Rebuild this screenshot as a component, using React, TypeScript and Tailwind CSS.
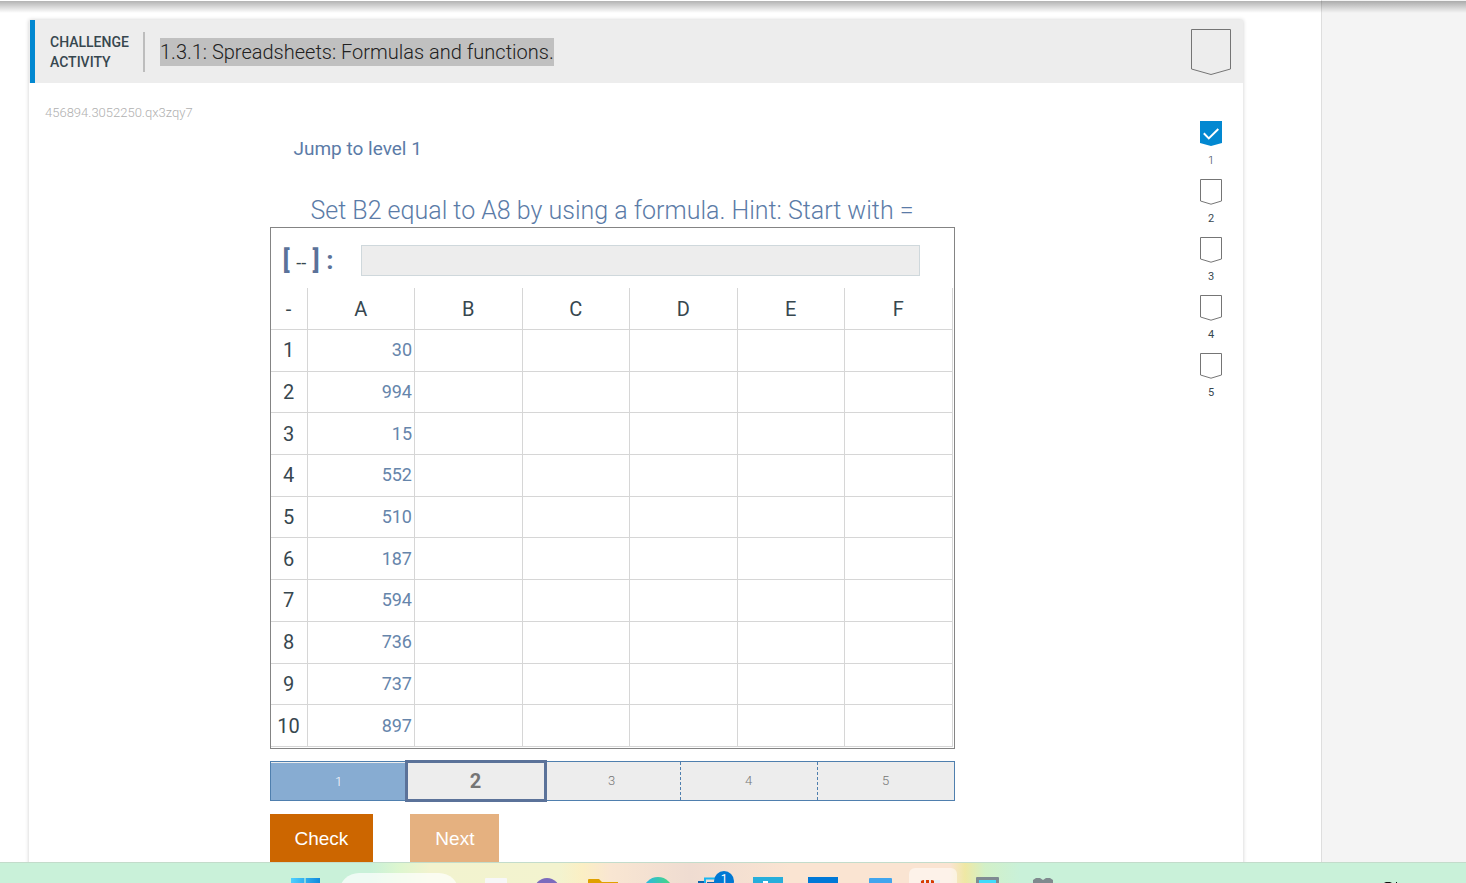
import React from "react";
import { clsx } from "clsx";

const columns = ["A", "B", "C", "D", "E", "F"];
const values = [30, 994, 15, 552, 510, 187, 594, 736, 737, 897];
const levels = [1, 2, 3, 4, 5];

function LevelBadge({ done }: { done: boolean }) {
  return (
    <svg className="w-[22px] h-[26px]" viewBox="0 0 22 26" fill="none">
      {done ? (
        <>
          <path d="M0 0H22V22L11 25L0 22Z" fill="#0288d1" />
          <path d="M3.8 12.2L8.8 17.4L18.3 8" stroke="#fff" strokeWidth="2" />
        </>
      ) : (
        <path d="M.5 .5H21.5V22L11 25.2L.5 22Z" stroke="#757575" />
      )}
    </svg>
  );
}

function Header() {
  return (
    <header className="flex items-center bg-[#ededed] h-[63px] border-l border-[#ededed] pr-3">
      <div className="w-[5px] h-full bg-[#0288d1]" />
      <div className="w-[110px] pl-[15px] mr-[15px] border-r-2 border-[#bdbdbd] text-sm leading-5 font-medium text-[#37474f]">
        CHALLENGE ACTIVITY
      </div>
      <h1 className="text-xl leading-7 font-light text-[#212121] bg-[#c0c0c0]">
        1.3.1: Spreadsheets: Formulas and functions.
      </h1>
      <svg className="w-10 h-[46px] ml-auto" viewBox="0 0 40 46" fill="none">
        <path d="M.5 .5H39.5V40L20 45.5L.5 40Z" stroke="#757575" />
      </svg>
    </header>
  );
}

function Spreadsheet() {
  return (
    <div className="border border-[#848484] h-[522px] pr-px">
      <div className="flex items-center h-[60px] pt-1 pl-3">
        <label
          htmlFor="formula"
          className="w-[78px] text-[26px] leading-8 font-bold text-[#5b7299] whitespace-pre"
        >
          [ <span className="text-lg font-normal text-[#37474f]">--</span> ] :
        </label>
        <input
          id="formula"
          disabled
          className="flex-1 h-[31px] mr-[33px] bg-[#ededed] border border-[#cfd8dc]"
        />
      </div>
      <table className="w-full h-[459px] table-fixed border-separate border-spacing-0">
        <thead>
          <tr>
            <th className="w-[37px] h-[42px] border-r border-b border-[#d6d6d6] text-xl font-normal text-[#37474f]">
              -
            </th>
            {columns.map((name) => (
              <th
                key={name}
                className="border-r border-b border-[#d6d6d6] text-xl font-normal text-[#37474f]"
              >
                {name}
              </th>
            ))}
          </tr>
        </thead>
        <tbody>
          {values.map((value, i) => (
            <tr key={i}>
              <th className="border-r border-b border-[#d6d6d6] text-xl font-normal text-[#37474f]">
                {i + 1}
              </th>
              {columns.map((name) => (
                <td
                  key={name}
                  className="border-r border-b border-[#d6d6d6] pr-[2px] text-right text-lg text-[#6685ab]"
                >
                  {name === "A" ? value : ""}
                </td>
              ))}
            </tr>
          ))}
        </tbody>
      </table>
    </div>
  );
}

function ProgressBar() {
  return (
    <ol className="flex h-10 mt-3 border border-[#4f7fae] bg-[#ededed] text-[13px] font-light text-[#757575]">
      {levels.map((n) => (
        <li
          key={n}
          className={clsx(
            "flex flex-1 items-center justify-center",
            n === 1 && "bg-[#87acd2] text-white border-t border-[#ededed]",
            n === 2 &&
              "relative -my-[2px] -ml-[2px] -mr-[3px] border-3 border-[#5b7299] bg-[#ededed] text-xl font-bold",
            (n === 3 || n === 4) && "border-r border-dashed border-[#4f7fae]"
          )}
        >
          {n}
        </li>
      ))}
    </ol>
  );
}

function Taskbar() {
  return (
    <footer className="relative flex items-start h-[21px] shrink-0 overflow-hidden pl-[290px] border-t border-[#c3dccb] bg-[linear-gradient(90deg,#c9f1d9_0px,#c9f1d9_370px,#def6cf_400px,#f2f3cf_430px,#f3f3cf_560px,#fbefc4_582px,#f9e6d2_610px,#efdcd1_690px,#fae4d2_790px,#fae4d2_950px,#efe8a4_965px,#d2f0c8_985px,#c9f1d9_1020px)]">
      <svg className="w-[30px] h-5" viewBox="0 0 30 20">
        <defs>
          <linearGradient id="win">
            <stop offset="0" stopColor="#4fd0ff" />
            <stop offset="1" stopColor="#108bdc" />
          </linearGradient>
        </defs>
        <path d="M1 15H14.4V20H1ZM15.6 15H30V20H15.6Z" fill="url(#win)" />
      </svg>
      <div className="w-[120px] h-10 mt-[10px] mx-[19px] rounded-full bg-white/70" />
      <div className="flex gap-[25px]">
        {/* task view */}
        <svg className="w-[30px] h-5" viewBox="0 0 30 20">
          <rect x="7" y="15" width="22" height="9" rx="1" fill="#f7f7f7" />
        </svg>
        {/* chat */}
        <svg className="w-[30px] h-5" viewBox="0 0 30 20">
          <circle cx="14" cy="28" r="13" fill="#7b6bbd" />
        </svg>
        {/* files */}
        <svg className="w-[30px] h-5" viewBox="0 0 30 20">
          <path d="M0 20V17Q0 16 1 16H11L14 19H30V20Z" fill="#e0a000" />
        </svg>
        {/* browser */}
        <svg className="w-[30px] h-5" viewBox="0 0 30 20">
          <defs>
            <linearGradient id="edge">
              <stop offset="0" stopColor="#28b5ec" />
              <stop offset="1" stopColor="#4bd978" />
            </linearGradient>
          </defs>
          <circle cx="15" cy="29" r="15" fill="url(#edge)" />
        </svg>
        {/* mail with its unread count */}
        <div className="relative w-[30px] h-5">
          <svg className="w-[30px] h-5" viewBox="0 0 30 20">
            <path d="M0 20V18H8V20Z" fill="#0a64ad" />
            <path d="M7 20V15.500H20" fill="none" stroke="#19b6f2" strokeWidth="2" />
            <path d="M9 19.500H18" stroke="#0a64ad" />
          </svg>
          <span className="absolute left-4 top-2 size-5 rounded-full bg-[#0078d4] text-center text-xs leading-4 text-white">
            1
          </span>
        </div>
        <svg className="w-[30px] h-5" viewBox="0 0 30 20">
          <path d="M0 14H30V20H0Z" fill="#27aedb" />
          <path d="M10 18H15V20H10Z" fill="#fff" />
        </svg>
        <svg className="w-[30px] h-5" viewBox="0 0 30 20">
          <path d="M0 14H30V20H0Z" fill="#0078d7" />
        </svg>
        <svg className="w-[30px] h-5" viewBox="0 0 30 20">
          <rect x="6" y="15" width="23" height="9" rx="1" fill="#41a5ee" />
        </svg>
        {/* the app in front gets a lit tile */}
        <div className="w-12 h-10 mt-[5px] -mx-[9px] rounded-md bg-white/50">
          <svg className="w-12 h-[15px]" viewBox="0 0 48 15">
            <path d="M11 12H31V15H11Z" fill="#e8edf2" />
            <path d="M12 13Q13 12 15 12V15H12ZM17 12H20V15H17ZM22 12Q25 12 25 13V15H22Z" fill="#d83b01" />
          </svg>
        </div>
        <svg className="w-[30px] h-5" viewBox="0 0 30 20">
          <path d="M3 20V15Q3 14 4 14H25Q26 14 26 15V20Z" fill="#7f8a92" />
          <path d="M6 17H23V20H6Z" fill="#3fdcfb" />
        </svg>
        <svg className="w-[30px] h-5" viewBox="0 0 30 20">
          <path d="M5 20V17L8 15H12L15 17L18 15H22L25 17V20Z" fill="#808a8e" />
        </svg>
      </div>
      <svg className="w-4 h-5 ml-auto mr-[66px]" viewBox="0 0 16 20">
        <path d="M0 20L2 19H6L8 20ZM12 19H13V20H12Z" fill="#111" />
      </svg>
    </footer>
  );
}

function App() {
  return (
    <div className="relative flex flex-col h-screen overflow-hidden bg-[#f4f4f4] font-['Roboto',sans-serif]">
      <div className="absolute inset-x-0 top-px h-3 bg-linear-to-b from-black/30 to-transparent" />
      <div className="flex flex-1 min-h-0 overflow-hidden">
        <main className="flex-1 h-full bg-white border-r border-[#dedede] pt-5 pl-[29px] pr-[78px]">
          <section className="h-screen shadow-[0_0_4px_rgba(0,0,0,0.2)]">
            <Header />
            <div className="flex">
              <div className="flex-1 pt-5">
                <p className="pl-4 text-[13px] leading-5 font-light text-[#b0b0b0]">
                  456894.3052250.qx3zqy7
                </p>
                <div className="w-[685px] mx-auto">
                  <button className="block mt-3 ml-6 text-[19px] leading-7 text-[#5b7ba7]">
                    Jump to level 1
                  </button>
                  <p className="mt-8 text-center text-[25px] leading-8 font-light text-[#5b7ba7]">
                    Set B2 equal to A8 by using a formula. Hint: Start with =
                  </p>
                  <Spreadsheet />
                  <ProgressBar />
                  <div className="flex mt-[13px] font-['Liberation_Sans',sans-serif] text-[19px] text-white">
                    <button className="h-[51px] px-[25px] mr-[37px] bg-[#cc6600]">
                      Check
                    </button>
                    <button className="h-[51px] px-[25px] bg-[#e5b180]">
                      Next
                    </button>
                  </div>
                </div>
              </div>
              <ol className="flex flex-col items-center gap-[10px] w-12 pl-1 pr-5 pt-[38px]">
                {levels.map((n) => (
                  <li
                    key={n}
                    className="flex flex-col items-center gap-[6px] text-[11px] leading-4 text-[#37474f]"
                  >
                    <LevelBadge done={n === 1} />
                    <span className={clsx(n === 1 && "font-light")}>{n}</span>
                  </li>
                ))}
              </ol>
            </div>
          </section>
        </main>
        <aside className="w-36" />
      </div>
      <Taskbar />
    </div>
  );
}

export default App;
